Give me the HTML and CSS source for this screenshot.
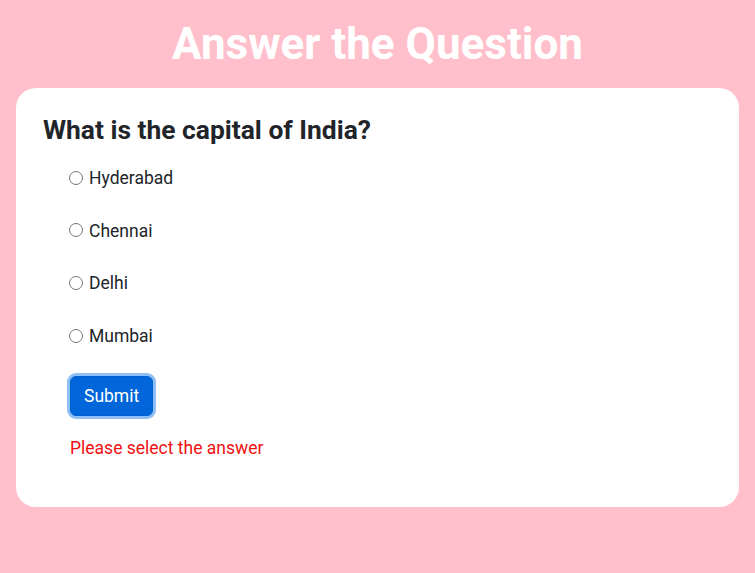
FILE: index.html
```html
<!DOCTYPE html>
<html>
<head>
<meta charset="utf-8">
<link rel="stylesheet" href="styles.css">
</head>
<body>
<h1 class="title">Answer the Question</h1>
<div class="card">
  <h2 class="question">What is the capital of India?</h2>
  <form class="options">
    <label class="option"><input type="radio" name="ans"> Hyderabad</label>
    <label class="option"><input type="radio" name="ans"> Chennai</label>
    <label class="option"><input type="radio" name="ans"> Delhi</label>
    <label class="option"><input type="radio" name="ans"> Mumbai</label>
    <div class="actions"><button type="button" class="submit">Submit</button></div>
    <p class="error">Please select the answer</p>
  </form>
</div>
</body>
</html>
```
FILE: styles.css
```css
html, body {
  margin: 0;
  padding: 0;
}
body {
  background: #ffc0cb;
  font-family: Roboto, "Liberation Sans", sans-serif;
  color: #212529;
  padding: 0 16px;
  height: 573px;
  box-sizing: border-box;
}
.title {
  margin: 0;
  padding-top: 18px;
  height: 88px;
  box-sizing: border-box;
  text-align: center;
  color: #fff;
  font-size: 44px;
  font-weight: 700;
  line-height: 52px;
}
.card {
  background: #fff;
  border-radius: 20px;
  height: 419px;
  box-sizing: border-box;
  padding: 25px 27px 0;
}
.question {
  margin: 0 0 18px;
  font-size: 26.4px;
  font-weight: 700;
  line-height: 34px;
}
.options {
  padding-left: 26px;
}
.option {
  display: flex;
  align-items: center;
  font-size: 17.5px;
  line-height: 26px;
  height: 26px;
  margin-bottom: 26.7px;
}
.option input {
  margin: -1px 6px 0 0;
  width: 14px;
  height: 14px;
}
.actions {
  margin-top: 0;
}
.submit {
  font-family: Roboto, "Liberation Sans", sans-serif;
  font-size: 17.5px;
  color: #fff;
  background: #0066d9;
  border: 1px solid #0060cc;
  border-radius: 6px;
  padding: 0 13px;
  height: 40px;
  margin-left: 1px;
  box-shadow: 0 0 0 3px #8fc0f5;
}
.error {
  margin: 19px 0 0 1px;
  color: #ee1111;
  font-size: 17.5px;
  line-height: 26px;
}
```
